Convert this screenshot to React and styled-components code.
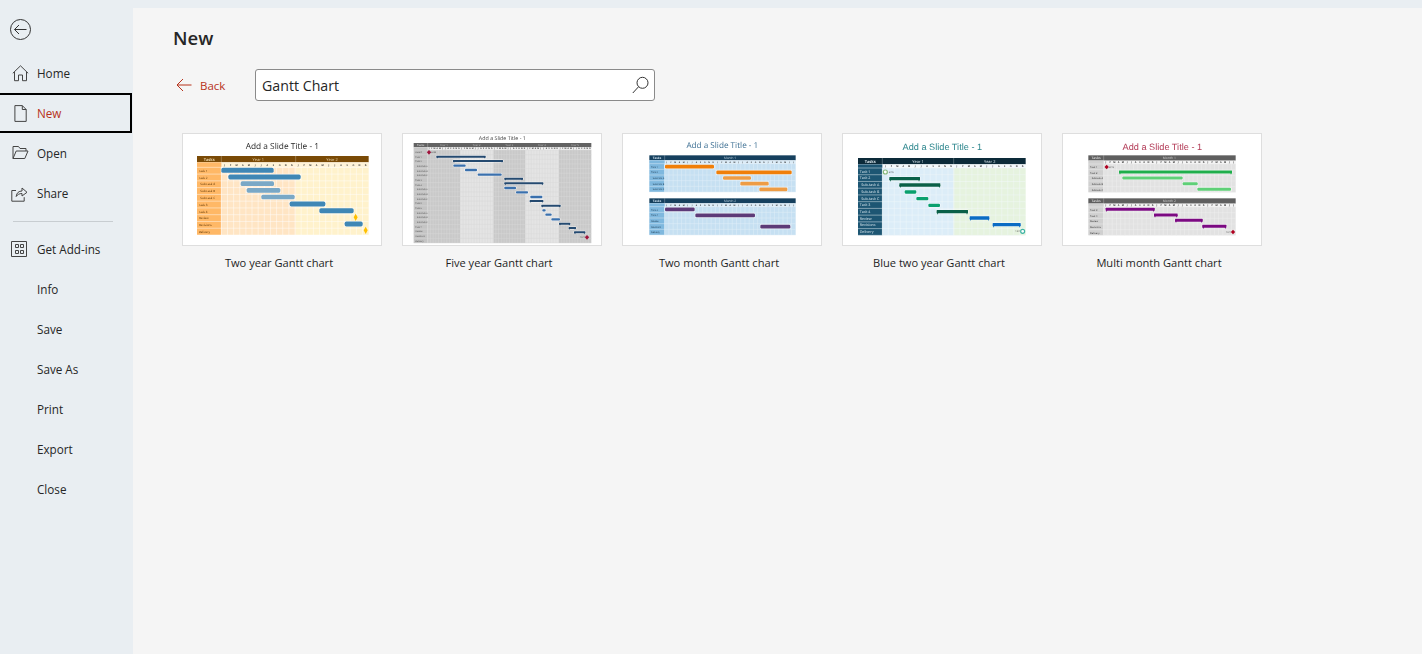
import styled, { createGlobalStyle } from "styled-components";

const GlobalStyle = createGlobalStyle`
  html, body { margin: 0; padding: 0; height: 100%; }
  body {
    background: #e9eef2;
    font-family: "Open Sans", "Noto Sans", sans-serif;
    color: #262626;
    overflow: hidden;
  }
`;

// chart coordinates are in a 594x333 box, three times the size of the thumbnail
const range = (n) => Array.from({ length: n }, (_, i) => i);

const twoYear = {
  title: { text: "Add a Slide Title - 1", y: 58, size: 25, color: "#2b2b2b", x: 307 },
  tables: [{
    x0: 51, x1: 566, y0: 78, headH: 19, subH: 15, rowH: 20.3, labelX: 124, labelSize: 9, tickSize: 7,
    head: "#7a4a06", headText: "#e8d3a8", sub: "#fff3d8", labelBg: "#ffb866", labelText: "#5a3300",
    columns: 24, grid: "#ffffff",
    bands: [[124, 347, "#ffe5c4"], [347, 566, "#fff2cc"]],
    headers: [["Year 1", 235], ["Year 2", 456]],
    split: 347,
    labels: ["Task 1", "Task 2", " Sub-task A", " Sub-task B", " Sub-task C", "Task 3", "Task 4", "Review", "Revisions", "Delivery"],
    bars: [
      [124, 281, 121, "#3f87b5", 15], [145, 362, 141, "#3f87b5", 15], [182, 282, 161, "#7aa8c6", 14],
      [200, 301, 181, "#7aa8c6", 14], [244, 344, 201, "#7aa8c6", 14], [329, 436, 222, "#3f87b5", 15],
      [418, 521, 242, "#3f87b5", 15], [494, 548, 282, "#3f87b5", 15],
    ],
    marks: [[527, 262, "#ffc000", "tall"], [557, 301, "#ffc000", "tall"]],
  }],
};

const fiveYear = {
  title: { text: "Add a Slide Title - 1", y: 29, size: 16, color: "#404040", x: 307 },
  tables: [{
    x0: 41, x1: 574, y0: 39, headH: 13, subH: 8, rowH: 13.95, labelX: 83, labelSize: 6.500, tickSize: 6,
    head: "#636363", headText: "#bdbdbd", sub: "#f2f2f2", labelBg: "#c4c4c4", labelText: "#4a4a4a",
    columns: 60, grid: "#d8d8d8",
    bands: [[83, 180, "#c9c9c9"], [180, 280, "#e4e4e4"], [280, 377, "#c9c9c9"], [377, 476, "#e4e4e4"], [476, 574, "#c9c9c9"]],
    headers: [["Year 1", 132], ["Year 2", 230], ["Year 3", 328], ["Year 4", 426], ["Year 5", 525]],
    labels: ["Award", "Task 1", "Task 2", "  Sub-task A", "  Sub-task B", "  Sub-task C", "Task 3", "Task 4", "  Sub-task A", "  Sub-task B", "  Sub-task C", "Task 5", "Task 6", "  Sub-task A", "  Sub-task B", "  Sub-task C", "Task 7", "Review", "Revisions", "Delivery"],
    bars: [
      [109, 257, 80, "#254a70", 6, "cap"], [159, 309, 93, "#254a70", 6, "cap"], [160, 197, 107, "#3a70ad", 7],
      [195, 231, 120, "#3a70ad", 7], [233, 305, 134, "#3a70ad", 7], [313, 369, 146, "#254a70", 6, "cap"],
      [313, 430, 160, "#254a70", 6, "cap"], [313, 348, 174, "#3a70ad", 7], [348, 384, 187, "#3a70ad", 7],
      [391, 427, 201, "#3a70ad", 7], [389, 430, 213, "#254a70", 6, "cap"], [424, 482, 227, "#254a70", 6, "cap"],
      [427, 437, 241, "#3a70ad", 7], [436, 455, 254, "#3a70ad", 7], [454, 480, 268, "#3a70ad", 7],
      [477, 511, 281, "#254a70", 6, "cap"], [506, 528, 294, "#254a70", 6, "cap"], [522, 556, 307, "#254a70", 6, "cap"],
    ],
    marks: [[87, 67, "#a0143c"], [561, 322, "#a0143c"]],
    notes: [[94, 70, "6/30"], [540, 324, "12/1"]],
  }],
};

const blueTable = {
  x0: 88, x1: 527, headH: 15, subH: 10, rowH: 17, labelX: 134, labelSize: 7, tickSize: 6,
  head: "#16405e", headText: "#c8dcea", sub: "#dcecf7", labelBg: "#7fb8de", labelText: "#1c3a52",
  columns: 31, grid: "#e3f0f9",
  bands: [[134, 527, "#c6e0f2"]],
  headers: [["Month 1", 330]],
};

const twoMonth = {
  title: { text: "Add a Slide Title - 1", y: 55, size: 24.500, color: "#3d6f93", x: 307 },
  tables: [
    {
      ...blueTable, y0: 76,
      labels: ["Task 1", "Task 2", "  Sub-task A", "  Sub-task B", "  Sub-task C"],
      bars: [
        [135, 282, 110, "#f07f09", 11], [289, 515, 127, "#f07f09", 11], [309, 393, 144, "#ee9c44", 11],
        [361, 446, 161, "#ee9c44", 11], [418, 502, 178, "#ee9c44", 11],
      ],
    },
    {
      ...blueTable, y0: 205,
      headers: [["Month 2", 330]],
      labels: ["Task 3", "Task 4", "Review", "Revisions", "Delivery"],
      bars: [[135, 224, 238, "#5d3a78", 11], [226, 405, 256, "#5d3a78", 11], [421, 511, 290, "#5d3a78", 11]],
    },
  ],
};

const blueTwoYear = {
  title: { text: "Add a Slide Title - 1", y: 61, size: 27.500, color: "#2b858c", x: 307, font: "Liberation Sans" },
  tables: [{
    x0: 54, x1: 557, y0: 84, headH: 19, subH: 11, rowH: 20.2, labelX: 127, labelSize: 11, tickSize: 7,
    head: "#0c2a39", headText: "#d8e4ea", sub: "#f4f9fc", labelBg: "#1d5673", labelText: "#dbe8ef",
    columns: 24, grid: "#f2f8fb",
    bands: [[127, 341, "#dcedf8"], [341, 557, "#e6f3df"]],
    headers: [["Year 1", 234], ["Year 2", 449]],
    split: 341,
    labels: ["Task 1", "Task 2", "  Sub-task A", "  Sub-task B", "  Sub-task C", "Task 3", "Task 4", "Review", "Revisions", "Delivery"],
    bars: [
      [148, 240, 146, "#0a6048", 10, "cap"], [178, 301, 165, "#0a6048", 10, "cap"], [194, 229, 186, "#0aa06e", 10],
      [229, 265, 206, "#0aa06e", 10], [265, 300, 226, "#0aa06e", 10], [290, 384, 245, "#0a6048", 10, "cap"],
      [389, 448, 264, "#0a6cc4", 10, "cap"], [458, 542, 284, "#0a6cc4", 10, "cap"],
    ],
    rings: [[136, 126, "#86b97a"], [548, 304, "#3fb3a4"]],
    notes: [[146, 128, "6/15"], [526, 306, "12/1"]],
  }],
};

const grayTable = {
  x0: 85, x1: 527, headH: 16, subH: 10, rowH: 17, labelX: 131, labelSize: 7.500, tickSize: 7,
  head: "#5f5f5f", headText: "#d0d0d0", sub: "#f4f4f4", labelBg: "#d0d0d0", labelText: "#333333",
  columns: 31, grid: "#f0f0f0",
  bands: [[131, 527, "#e2e2e2"]],
};

const multiMonth = {
  title: { text: "Add a Slide Title - 1", y: 61, size: 27.500, color: "#b23a56", x: 307, font: "Liberation Sans" },
  tables: [
    {
      ...grayTable, y0: 76,
      headers: [["Month 1", 328]],
      labels: ["Task 1", "Task 2", "  Subtask A", "  Subtask B", "  Subtask C"],
      bars: [
        [177, 516, 126, "#1fae4b", 9, "cap"], [187, 368, 144, "#5fd077", 9], [368, 413, 161, "#5fd077", 9],
        [412, 513, 178, "#5fd077", 9],
      ],
      marks: [[140, 111, "#b00020"]],
      notes: [[147, 113, "6/15"]],
    },
    {
      ...grayTable, y0: 205,
      headers: [["Month 2", 328]],
      labels: ["Task 3", "Task 4", "Review", "Revisions", "Delivery"],
      bars: [
        [137, 284, 238, "#7c0a82", 9, "cap"], [282, 353, 255, "#7c0a82", 9, "cap"], [345, 428, 271, "#7c0a82", 9, "cap"],
        [427, 499, 289, "#7c0a82", 9, "cap"],
      ],
      marks: [[519, 306, "#b00020"]],
      notes: [[498, 309, "12/1"]],
    },
  ],
};

const templates = [
  { name: "Two year Gantt chart", chart: twoYear },
  { name: "Five year Gantt chart", chart: fiveYear },
  { name: "Two month Gantt chart", chart: twoMonth },
  { name: "Blue two year Gantt chart", chart: blueTwoYear },
  { name: "Multi month Gantt chart", chart: multiMonth },
];

function GanttTable({ t }) {
  const rows = t.labels.length;
  const top = t.y0 + t.headH + t.subH;
  const bottom = top + rows * t.rowH;
  const colW = (t.x1 - t.labelX) / t.columns;
  return (
    <g>
      <rect x={t.x0} y={t.y0} width={t.x1 - t.x0} height={t.headH} fill={t.head} />
      <rect x={t.x0} y={t.y0 + t.headH} width={t.x1 - t.x0} height={t.subH} fill={t.sub} />
      <rect x={t.x0} y={t.y0 + t.headH} width={t.labelX - t.x0} height={t.subH + rows * t.rowH} fill={t.labelBg} />
      {t.bands.map(([a, b, c]) => <rect key={a} x={a} y={top} width={b - a} height={rows * t.rowH} fill={c} />)}
      {range(t.columns).map((i) => (
        <line key={i} x1={t.labelX + i * colW} x2={t.labelX + i * colW} y1={top} y2={bottom} stroke={t.grid} strokeWidth="1.4" />
      ))}
      {range(t.columns).map((i) => (
        <text key={i} x={t.labelX + (i + 0.5) * colW} y={t.y0 + t.headH + t.subH * 0.78} fontSize={t.tickSize} fontWeight="700" textAnchor="middle" fill="#333">
          {"JFMAMJJASOND"[i % 12]}
        </text>
      ))}
      {range(rows + 1).map((i) => (
        <line key={i} x1={t.x0} x2={t.x1} y1={top + i * t.rowH} y2={top + i * t.rowH} stroke={t.grid} strokeWidth="1.4" />
      ))}
      <text x={(t.x0 + t.labelX) / 2} y={t.y0 + t.headH - t.headH * 0.25} fontSize={t.headH * 0.62} fontWeight="700" textAnchor="middle" fill={t.headText}>Tasks</text>
      {t.headers.map(([label, x]) => (
        <text key={label} x={x} y={t.y0 + t.headH - t.headH * 0.25} fontSize={t.headH * 0.62} textAnchor="middle" fill={t.headText}>{label}</text>
      ))}
      {t.split && <line x1={t.split} x2={t.split} y1={t.y0} y2={t.y0 + t.headH} stroke="#ffffff" strokeOpacity="0.5" strokeWidth="1.5" />}
      <line x1={t.labelX} x2={t.labelX} y1={t.y0} y2={t.y0 + t.headH} stroke="#ffffff" strokeOpacity="0.5" strokeWidth="1.5" />
      {t.labels.map((label, i) => (
        <text key={i} x={t.x0 + 5 + (label.startsWith(" ") ? 5 : 0)} y={top + (i + 0.68) * t.rowH} fontSize={t.labelSize} fontWeight="500" fill={t.labelText}>
          {label.trim()}
        </text>
      ))}
      {(t.bars || []).map(([a, b, y, c, h, kind]) => (
        <g key={`${a}-${y}`}>
          <rect x={a - 1.5} y={y - h / 2 - 1.5} width={b - a + 3} height={h + 3} rx="3" fill="#ffffff" fillOpacity="0.7" />
          <rect x={a} y={y - h / 2} width={b - a} height={h} rx={kind ? 1 : h / 3} fill={c} />
          {kind === "cap" && <path d={`M${a} ${y}h6l-3 ${h * 0.9}zM${b - 6} ${y}h6l-3 ${h * 0.9}z`} fill={c} />}
        </g>
      ))}
      {(t.marks || []).map(([x, y, c, tall]) => (
        <path key={x} d={tall ? `M${x} ${y - 11}l6 11l-6 11l-6 -11z` : `M${x} ${y - 7}l6.5 7l-6.5 7l-6.500 -7z`} fill={c} />
      ))}
      {(t.rings || []).map(([x, y, c]) => (
        <circle key={x} cx={x} cy={y} r="6" fill="#ffffff" stroke={c} strokeWidth="3.5" />
      ))}
      {(t.notes || []).map(([x, y, label]) => (
        <text key={x} x={x} y={y} fontSize="7" fill="#444">{label}</text>
      ))}
    </g>
  );
}

function GanttThumb({ chart }) {
  const { title, tables } = chart;
  return (
    <ThumbSvg viewBox="9 12 594 333">
      <text x={title.x} y={title.y} fontSize={title.size} fill={title.color} textAnchor="middle" fontFamily={title.font || "Open Sans"} fontWeight="500">
        {title.text}
      </text>
      {tables.map((t) => <GanttTable key={t.y0} t={t} />)}
    </ThumbSvg>
  );
}

const BackCircleIcon = () => (
  <svg width="23" height="23" viewBox="0 0 23 23" fill="none" stroke="#333" strokeWidth="1">
    <circle cx="11.5" cy="11.5" r="10" />
    <path d="M17.5 11.5H5.5M10 7l-4.5 4.5L10 16" />
  </svg>
);
const HomeIcon = () => (
  <svg width="17" height="17" viewBox="0 0 17 17" fill="none" stroke="#444" strokeWidth="1">
    <path d="M.8 8.3 8.5.8l7.7 7.5M2.5 7v8.7h4V10h4v5.7h4V7" />
  </svg>
);
const DocIcon = () => (
  <svg width="13" height="17" viewBox="0 0 13 17" fill="none" stroke="#444" strokeWidth="1">
    <path d="M.9.6h7.4l3.9 3.9v11.9H.9zM8.3.6v3.9h3.9" />
  </svg>
);
const FolderIcon = () => (
  <svg width="17" height="15" viewBox="0 0 17 15" fill="none" stroke="#444" strokeWidth="1">
    <path d="M1 13.5V1.500h5.500l1.500 2h6v2.500M1 13.500h11.800L16 6H4.200z" />
  </svg>
);
// share and add-ins sit a little further left than the other icons
const ShareIcon = () => (
  <svg width="20" height="17" viewBox="0 0 20 17" fill="none" stroke="#444" strokeWidth="1">
    <path d="M.8 5.500v10.700h12.400v-4M.8 5.500H5" />
    <path d="M5.200 11.500C5.500 7.800 8 6 11 6V3l5 4.300-5 3.700V8.500c-2.500 0-4.600 1-5.800 3z" />
  </svg>
);
const AddInsIcon = () => (
  <svg width="20" height="17" viewBox="0 0 20 17" fill="none" stroke="#444" strokeWidth="1">
    <path d="M.5.5h15v15H.5zM4.500 3.500h3v3h-3zM9.500 3.500h3v3h-3zM4.500 9.500h3v3h-3zM9.500 9.500h3v3h-3z" />
  </svg>
);
const BackArrowIcon = () => (
  <svg width="16" height="14" viewBox="0 0 16 14" fill="none" stroke="#b7321a" strokeWidth="1">
    <path d="M15.500 7H1M7 1 1 7l6 6" />
  </svg>
);
const SearchIcon = () => (
  <svg width="17" height="18" viewBox="0 0 17 18" fill="none" stroke="#333" strokeWidth="1">
    <circle cx="10.500" cy="6.800" r="5.500" />
    <path d="M6.500 10.800 .8 17" />
  </svg>
);

const navTop = [
  { label: "Home", icon: <HomeIcon /> },
  { label: "New", icon: <DocIcon />, active: true },
  { label: "Open", icon: <FolderIcon /> },
  { label: "Share", icon: <ShareIcon /> },
];
const navBottom = [
  { label: "Get Add-ins", icon: <AddInsIcon /> },
  { label: "Info" }, { label: "Save" }, { label: "Save As" }, { label: "Print" }, { label: "Export" }, { label: "Close" },
];

const NavList = ({ items }) => items.map((item) => (
  <NavItem key={item.label} $active={item.active}>
    <NavIcon>{item.icon}</NavIcon>
    {item.label}
  </NavItem>
));

export default function App() {
  return (
    <Page>
      <GlobalStyle />
      <Sidebar>
        <BackCircle><BackCircleIcon /></BackCircle>
        <NavList items={navTop} />
        <Divider />
        <NavList items={navBottom} />
      </Sidebar>
      <Main>
        <Title>New</Title>
        <SearchRow>
          <BackLink><BackArrowIcon />Back</BackLink>
          <SearchBox>
            <SearchText>Gantt Chart</SearchText>
            <SearchIcon />
          </SearchBox>
        </SearchRow>
        <Gallery>
          {templates.map((t) => (
            <Template key={t.name}>
              <Card><GanttThumb chart={t.chart} /></Card>
              <CardLabel>{t.name}</CardLabel>
            </Template>
          ))}
        </Gallery>
      </Main>
    </Page>
  );
}

const Page = styled.div`
  display: flex;
  width: 1422px;
  height: 654px;
  overflow: hidden;
`;

const Sidebar = styled.nav`
  flex: 0 0 133px;
  display: flex;
  flex-direction: column;
  padding-top: 18px;
  box-sizing: border-box;
`;

const BackCircle = styled.div`
  height: 35px;
  padding-left: 9px;
  display: flex;
  align-items: flex-start;
`;

const NavItem = styled.div`
  height: 40px;
  width: 132px;
  flex: none;
  box-sizing: border-box;
  display: flex;
  align-items: center;
  font-size: 11.700px;
  color: ${(p) => (p.$active ? "#b7321a" : "#262626")};
  border: 2px solid ${(p) => (p.$active ? "#000000" : "transparent")};
  border-left-width: 0;
`;

const NavIcon = styled.span`
  flex: 0 0 37px;
  height: 17px;
  display: flex;
  justify-content: center;
  padding-left: 4px;
  box-sizing: border-box;
`;

const Divider = styled.div`
  height: 1px;
  width: 100px;
  margin: 8px 0 7px 13px;
  background: #c8cdd1;
  flex: none;
`;

const Main = styled.main`
  flex: 1;
  margin-top: 8px;
  background: #f5f5f5;
  padding: 16px 0 0 40px;
  box-sizing: border-box;
`;

const Title = styled.h1`
  margin: 0;
  font-size: 18.500px;
  line-height: 27px;
  font-weight: 600;
  color: #262626;
`;

const SearchRow = styled.div`
  display: flex;
  align-items: center;
  margin-top: 18px;
`;

const BackLink = styled.div`
  display: flex;
  align-items: center;
  gap: 8px;
  width: 82px;
  padding-left: 3px;
  box-sizing: border-box;
  font-size: 11.500px;
  font-weight: 500;
  color: #b7321a;
`;

const SearchBox = styled.div`
  width: 400px;
  height: 32px;
  box-sizing: border-box;
  display: flex;
  align-items: center;
  justify-content: space-between;
  padding: 0 5px 0 6px;
  background: #ffffff;
  border: 1px solid #8a8a8a;
  border-radius: 3px;
`;

const SearchText = styled.span`
  font-size: 14.200px;
  color: #262626;
`;

const Gallery = styled.div`
  display: flex;
  gap: 20px;
  margin-top: 32px;
  padding-left: 9px;
`;

const Template = styled.div`
  width: 200px;
`;

const Card = styled.div`
  height: 113px;
  box-sizing: border-box;
  background: #ffffff;
  border: 1px solid #dedede;
`;

// the reference thumbnails are scaled down previews, so they read slightly soft
const ThumbSvg = styled.svg`
  display: block;
  width: 198px;
  height: 111px;
  font-family: "Open Sans", sans-serif;
  text-rendering: geometricPrecision;
  filter: blur(0.3px);
`;

const CardLabel = styled.div`
  margin-top: 9px;
  text-align: center;
  font-size: 11.100px;
  font-weight: 500;
  line-height: 16px;
  color: #1f1f1f;
  padding-right: 6px;
`;
